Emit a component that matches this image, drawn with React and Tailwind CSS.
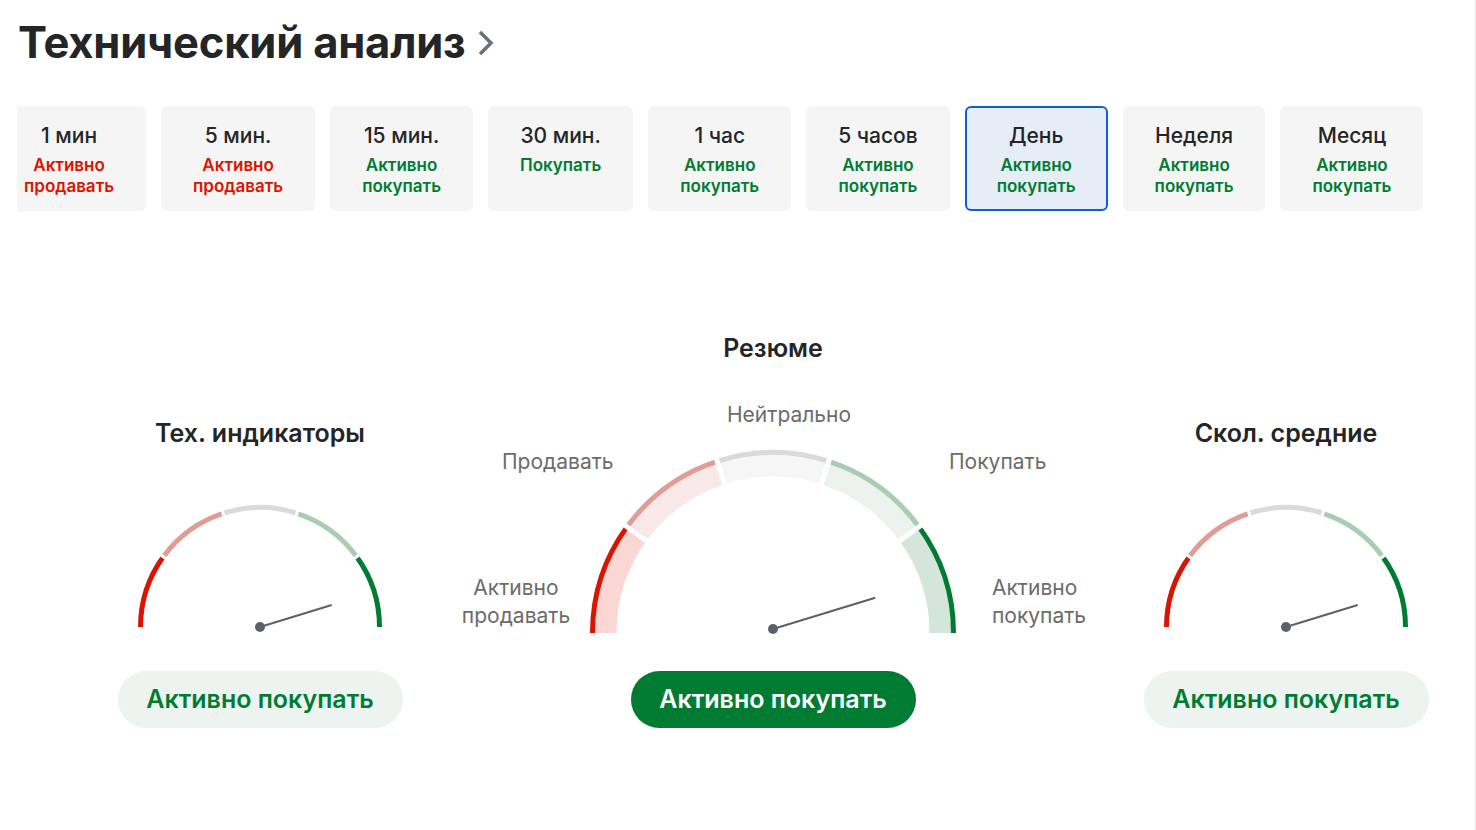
import React from "react";

const tabs = [
  { label: "1 мин", signal: "sell" },
  { label: "5 мин.", signal: "sell" },
  { label: "15 мин.", signal: "buy" },
  { label: "30 мин.", signal: "buyOnly" },
  { label: "1 час", signal: "buy" },
  { label: "5 часов", signal: "buy" },
  { label: "День", signal: "buy", active: true },
  { label: "Неделя", signal: "buy" },
  { label: "Месяц", signal: "buy" },
];

// segments left -> right, angles in degrees (0 = right, 180 = left)
const segments = [
  { from: 180, to: 144, dark: "#d91400", light: "#fbd7d3" },
  { from: 144, to: 108, dark: "#e09c95", light: "#f8e8e7" },
  { from: 108, to: 72, dark: "#dadada", light: "#f6f6f6" },
  { from: 72, to: 36, dark: "#a8cdb2", light: "#ecf3ee" },
  { from: 36, to: 0, dark: "#007c32", light: "#d4e6d9" },
];

const pt = (cx, cy, r, a) => {
  const rad = (a * Math.PI) / 180;
  return [cx + r * Math.cos(rad), cy - r * Math.sin(rad)];
};

const arc = (cx, cy, r, a0, a1) => {
  const [x0, y0] = pt(cx, cy, r, a0);
  const [x1, y1] = pt(cx, cy, r, a1);
  return `M ${x0} ${y0} A ${r} ${r} 0 0 1 ${x1} ${y1}`;
};

function Needle({ cx, cy, len }) {
  const [x, y] = pt(cx, cy, len, 17);
  return (
    <g>
      <line x1={cx} y1={cy} x2={x} y2={y} stroke="#5b606f" strokeWidth="2" />
      <circle cx={cx} cy={cy} r="5" fill="#5b606f" />
    </g>
  );
}

function SmallGauge() {
  const cx = 125;
  const cy = 125;
  return (
    <svg width="250" height="132" viewBox="0 0 250 132">
      {segments.map((s) => (
        <path key={s.from} d={arc(cx, cy, 119.5, s.from, s.to)} fill="none" stroke={s.dark} strokeWidth="5" />
      ))}
      {[144, 108, 72, 36].map((a) => {
        const [x0, y0] = pt(cx, cy, 112, a);
        const [x1, y1] = pt(cx, cy, 128, a);
        return <line key={a} x1={x0} y1={y0} x2={x1} y2={y1} stroke="#fff" strokeWidth="3" />;
      })}
      <Needle cx={cx} cy={cy} len={75} />
    </svg>
  );
}

function BigGauge() {
  const cx = 190;
  const cy = 184;
  return (
    <svg width="380" height="190" viewBox="0 0 380 190">
      {segments.map((s) => (
        <g key={s.from}>
          <path d={arc(cx, cy, 167.5, s.from, s.to)} fill="none" stroke={s.light} strokeWidth="22" />
          <path d={arc(cx, cy, 180.5, s.from, s.to)} fill="none" stroke={s.dark} strokeWidth="5" />
        </g>
      ))}
      {[144, 108, 72, 36].map((a) => {
        const [x0, y0] = pt(cx, cy, 150, a);
        const [x1, y1] = pt(cx, cy, 190, a);
        return <line key={a} x1={x0} y1={y0} x2={x1} y2={y1} stroke="#fff" strokeWidth="5" />;
      })}
      <Needle cx={cx} cy={cy - 4} len={107} />
    </svg>
  );
}

function SideColumn({ title }) {
  return (
    <div className="flex w-[320px] flex-col items-center">
      <h3 className="mb-[54px] mt-[2px] text-[25px] font-semibold leading-[30px] text-[#232526]">{title}</h3>
      <SmallGauge />
      <button className="mt-[37px] h-[57px] w-[285px] rounded-full bg-[#edf3ef] text-[25px] font-semibold text-[#007c32]">
        Активно покупать
      </button>
    </div>
  );
}

export default function App() {
  return (
    <div className="min-h-screen w-full border-r border-[#e6e6e6] bg-white font-['Inter','Noto_Sans',sans-serif] text-[#232526]">
      {/* Header */}
      <div className="flex items-center pl-[18px] pt-[14px]">
        <h1 className="text-[43.5px] font-bold leading-[56px] tracking-[-0.2px]">Технический анализ</h1>
        <svg className="ml-[12px] mt-[2px]" width="18" height="28" viewBox="0 0 18 28">
          <polyline points="3,3 14,14 3,25" fill="none" stroke="#6b6f7a" strokeWidth="3.5" />
        </svg>
      </div>

      {/* Timeframe tabs */}
      <div className="ml-[17px] mt-[36px] overflow-hidden">
        <div className="-ml-[25px] flex gap-[15px]">
          {tabs.map((t) => (
            <div
              key={t.label}
              className={`flex h-[105px] shrink-0 flex-col items-center rounded-md border-2 px-[30px] pt-[15px] text-center ${
                t.active ? "border-[#0a62d0] bg-[#e6edf6]" : "border-transparent bg-[#f5f5f5]"
              }`}
            >
              <div className="text-[21px] font-medium leading-[26px]">{t.label}</div>
              <div
                className={`mt-[6px] text-[17px] font-semibold leading-[21px] ${
                  t.signal === "sell" ? "text-[#d91400]" : "text-[#007c32]"
                }`}
              >
                {t.signal === "buyOnly" ? (
                  "Покупать"
                ) : (
                  <>
                    Активно
                    <br />
                    {t.signal === "sell" ? "продавать" : "покупать"}
                  </>
                )}
              </div>
            </div>
          ))}
        </div>
      </div>

      {/* Gauges */}
      <div className="ml-[100px] mt-[122px] flex w-[1346px] items-end justify-between pb-[102px]">
        <SideColumn title="Тех. индикаторы" />

        <div className="flex w-[640px] flex-col items-center">
          <h3 className="mb-[37px] text-[25px] font-semibold leading-[30px]">Резюме</h3>
          <div className="relative flex w-[640px] justify-center pt-[49px] text-[21px] leading-[28px] text-[#6b6b6b]">
            <span className="absolute left-[274px] top-[1px]">Нейтрально</span>
            <span className="absolute left-[49px] top-[48px]">Продавать</span>
            <span className="absolute left-[496px] top-[48px]">Покупать</span>
            <span className="absolute left-[4px] top-[174px] w-[118px] text-center">
              Активно
              <br />
              продавать
            </span>
            <span className="absolute left-[539px] top-[174px] text-left">
              Активно
              <br />
              покупать
            </span>
            <BigGauge />
          </div>
          <button className="mt-[32px] h-[57px] w-[285px] rounded-full bg-[#007c32] text-[25px] font-semibold text-white">
            Активно покупать
          </button>
        </div>

        <SideColumn title="Скол. средние" />
      </div>
    </div>
  );
}
